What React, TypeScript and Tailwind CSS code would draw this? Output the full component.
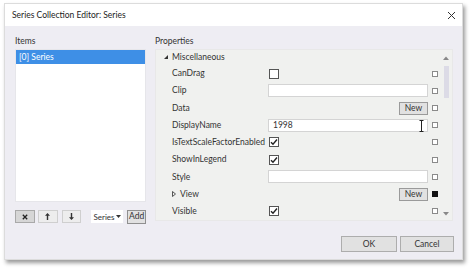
import React from "react";

const Sq = ({ filled = false }: { filled?: boolean }) => (
  <div
    className={
      "w-[6px] h-[6px] border " +
      (filled ? "bg-[#111] border-[#111]" : "bg-white border-[#8a8a8a]")
    }
  />
);

const Check = ({ checked }: { checked: boolean }) => (
  <div className="ml-[1px] w-[10px] h-[10px] border border-[#555] bg-white flex items-center justify-center">
    {checked && (
      <svg width="8" height="8" viewBox="0 0 8 8">
        <path d="M1 4.2 L3 6.3 L7 1.5" stroke="#222" strokeWidth="1.4" fill="none" />
      </svg>
    )}
  </div>
);

const TextBox = ({ value = "", cursor = false }: { value?: string; cursor?: boolean }) => (
  <div className="w-[160px] h-[13px] bg-white border border-[#d4d4d4] flex items-center pl-[4px] relative">
    <span>{value}</span>
    {cursor && (
      <svg className="absolute right-[3px] top-[0px]" width="5" height="12" viewBox="0 0 5 12">
        <path d="M0.5 0.5 H4.5 M2.5 0.5 V11.5 M0.5 11.5 H4.5" stroke="#222" strokeWidth="1" fill="none" />
      </svg>
    )}
  </div>
);

const NewBtn = () => (
  <div className="ml-auto w-[29px] h-[13px] bg-[#e1e1e1] border border-[#9a9a9a] flex items-center justify-center text-[8.5px]">
    New
  </div>
);

type Row = {
  label: string;
  value: React.ReactNode;
  filled?: boolean;
  expand?: boolean;
};

const rows: Row[] = [
  { label: "CanDrag", value: <Check checked={false} /> },
  { label: "Clip", value: <TextBox /> },
  { label: "Data", value: <NewBtn /> },
  { label: "DisplayName", value: <TextBox value="1998" cursor /> },
  { label: "IsTextScaleFactorEnabled", value: <Check checked /> },
  { label: "ShowInLegend", value: <Check checked /> },
  { label: "Style", value: <TextBox /> },
  { label: "View", value: <NewBtn />, filled: true, expand: true },
  { label: "Visible", value: <Check checked /> },
];

export default function App() {
  return (
    <div
      className="w-[474px] h-[272px] bg-white pt-[3px] pl-[4px] text-[#333] text-[8.5px]"
      style={{ fontFamily: "Lato, 'Open Sans', sans-serif" }}
    >
      <div className="w-[459px] h-[257px] flex flex-col shadow-[2px_3px_4px_rgba(0,0,0,0.4)] border border-[#dcdcdc]">
        {/* Title */}
        <div className="h-[22px] bg-white flex items-center pl-[7px] pr-[6px] shrink-0">
          <span className="text-[8.5px] text-[#222]">Series Collection Editor: Series</span>
          <svg className="ml-auto" width="9" height="9" viewBox="0 0 9 9">
            <path d="M1 1 L8 8 M8 1 L1 8" stroke="#333" strokeWidth="1" />
          </svg>
        </div>
        {/* Body */}
        <div className="flex-1 bg-[#eeedf3] flex flex-col pl-[10px] pr-[8px] pt-[10px] pb-[7px]">
          <div className="flex gap-[9px]">
            {/* Left */}
            <div className="w-[131px] flex flex-col">
              <div className="h-[13px] leading-[10px]">Items</div>
              <div className="h-[153px] bg-white border border-[#e6e6ea]">
                <div className="h-[14px] bg-[#3e8fe6] text-white flex items-center pl-[3px]">[0] Series</div>
              </div>
              <div className="flex items-center mt-[8px] h-[13px]">
                <div className="w-[20px] h-[13px] bg-[#d6d6d6] border border-[#a9a9a9] flex items-center justify-center">
                  <svg width="6" height="6" viewBox="0 0 6 6">
                    <path d="M0.8 0.8 L5.2 5.2 M5.2 0.8 L0.8 5.2" stroke="#222" strokeWidth="1.3" />
                  </svg>
                </div>
                <div className="ml-[3px] w-[20px] h-[13px] bg-[#ededed] border border-[#cfcfcf] flex items-center justify-center">
                  <svg width="5" height="7" viewBox="0 0 5 7">
                    <path d="M2.5 0 L5 2.8 H3.2 V7 H1.8 V2.8 H0 Z" fill="#333" />
                  </svg>
                </div>
                <div className="ml-[4px] w-[20px] h-[13px] bg-[#ededed] border border-[#cfcfcf] flex items-center justify-center">
                  <svg width="5" height="7" viewBox="0 0 5 7">
                    <path d="M2.5 7 L5 4.2 H3.2 V0 H1.8 V4.2 H0 Z" fill="#333" />
                  </svg>
                </div>
                <div className="ml-[10px] w-[32px] h-[13px] bg-white flex items-center pl-[2px] text-[8px]">
                  Series
                  <svg className="ml-[1px]" width="5" height="3" viewBox="0 0 5 3">
                    <path d="M0 0 H5 L2.5 3 Z" fill="#333" />
                  </svg>
                </div>
                <div className="ml-[4px] w-[19px] h-[14px] bg-[#e1e1e1] border border-[#8f8f8f] flex items-center justify-center">
                  Add
                </div>
              </div>
            </div>
            {/* Right */}
            <div className="w-[298px] flex flex-col">
              <div className="h-[13px] leading-[10px]">Properties</div>
              <div className="h-[172px] bg-[#f0f1ef] border border-[#e8e8e8] flex">
                <div className="flex-1 flex flex-col">
                  <div className="h-[15px] flex items-center pl-[8px]">
                    <svg width="4" height="4" viewBox="0 0 4 4">
                      <path d="M4 0 V4 H0 Z" fill="#333" />
                    </svg>
                    <span className="ml-[4px]">Miscellaneous</span>
                  </div>
                  {rows.map((r) => (
                    <div key={r.label} className="h-[17.25px] flex items-center">
                      <div className="w-[112px] pl-[16px] flex items-center">
                        {r.expand && (
                          <svg className="mr-[4px]" width="4" height="6" viewBox="0 0 4 6">
                            <path d="M0.5 0.5 L3.5 3 L0.5 5.5 Z" fill="none" stroke="#444" strokeWidth="0.9" />
                          </svg>
                        )}
                        <span className="whitespace-nowrap">{r.label}</span>
                      </div>
                      <div className="w-[160px] flex items-center">{r.value}</div>
                      <div className="w-[12px] flex items-center justify-center pl-[2px]">
                        <Sq filled={r.filled} />
                      </div>
                    </div>
                  ))}
                </div>
                <div className="w-[12px] flex flex-col items-center pt-[6px] pb-[4px]">
                  <svg width="6" height="4" viewBox="0 0 6 4">
                    <path d="M0 4 L3 0.5 L6 4 Z" fill="#888" />
                  </svg>
                  <div className="mt-[6px] w-[5px] h-[32px] bg-[#dcdbe6]" />
                  <svg className="mt-auto" width="6" height="4" viewBox="0 0 6 4">
                    <path d="M0 0 L3 3.5 L6 0 Z" fill="#888" />
                  </svg>
                </div>
              </div>
            </div>
          </div>
          <div className="mt-auto flex justify-end gap-[3px]">
            <div className="w-[56px] h-[16px] bg-[#e1e1e1] border border-[#adadad] flex items-center justify-center">OK</div>
            <div className="w-[54px] h-[16px] bg-[#e1e1e1] border border-[#adadad] flex items-center justify-center">Cancel</div>
          </div>
        </div>
      </div>
    </div>
  );
}
